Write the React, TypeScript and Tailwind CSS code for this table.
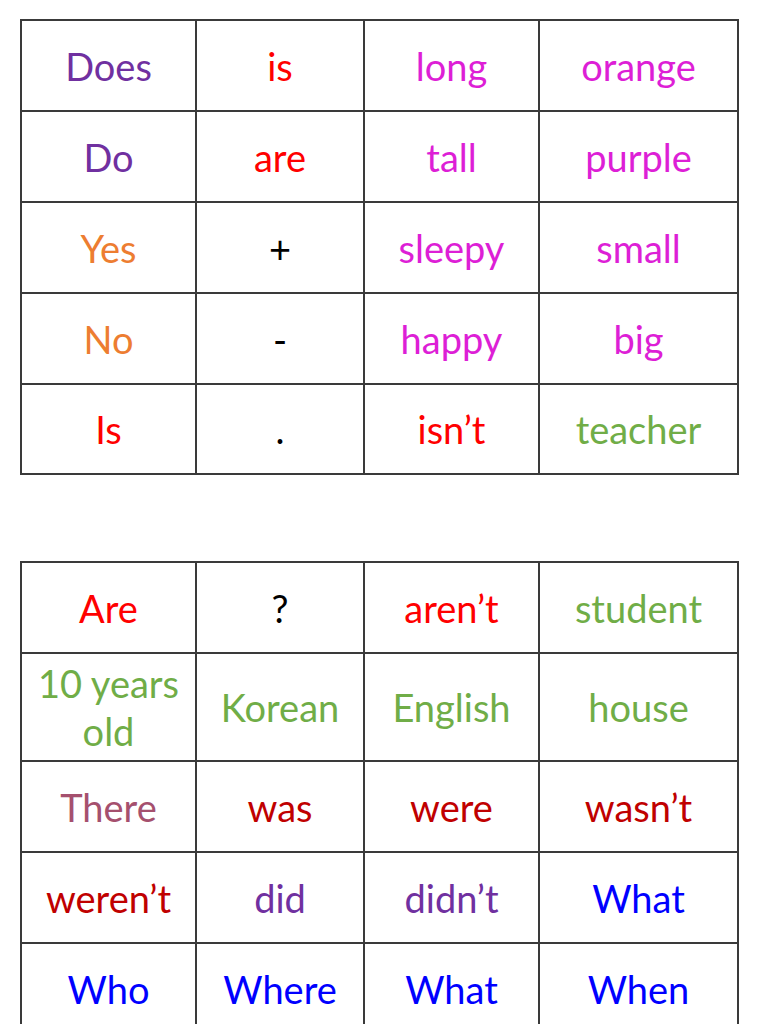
import React from "react";

type Cell = { t: string; c: string };

const P = "text-[#7030A0]";
const R = "text-[#FF0000]";
const M = "text-[#DD1FD6]";
const O = "text-[#ED7D31]";
const G = "text-[#70AD47]";
const K = "text-black";
const DR = "text-[#C00000]";
const B = "text-[#0000FF]";
const RO = "text-[#A5506E]";

const table1: Cell[][] = [
  [{ t: "Does", c: P }, { t: "is", c: R }, { t: "long", c: M }, { t: "orange", c: M }],
  [{ t: "Do", c: P }, { t: "are", c: R }, { t: "tall", c: M }, { t: "purple", c: M }],
  [{ t: "Yes", c: O }, { t: "+", c: K }, { t: "sleepy", c: M }, { t: "small", c: M }],
  [{ t: "No", c: O }, { t: "-", c: K }, { t: "happy", c: M }, { t: "big", c: M }],
  [{ t: "Is", c: R }, { t: ".", c: K }, { t: "isn\u2019t", c: R }, { t: "teacher", c: G }],
];

const table2: Cell[][] = [
  [{ t: "Are", c: R }, { t: "?", c: K }, { t: "aren\u2019t", c: R }, { t: "student", c: G }],
  [{ t: "10 years old", c: G }, { t: "Korean", c: G }, { t: "English", c: G }, { t: "house", c: G }],
  [{ t: "There", c: RO }, { t: "was", c: DR }, { t: "were", c: DR }, { t: "wasn\u2019t", c: DR }],
  [{ t: "weren\u2019t", c: DR }, { t: "did", c: P }, { t: "didn\u2019t", c: P }, { t: "What", c: B }],
  [{ t: "Who", c: B }, { t: "Where", c: B }, { t: "What", c: B }, { t: "When", c: B }],
];

function Grid({ rows, heights }: { rows: Cell[][]; heights: string[] }) {
  return (
    <table className="table-fixed border-collapse w-[717px]">
      <colgroup>
        <col className="w-[175px]" />
        <col className="w-[168px]" />
        <col className="w-[175px]" />
        <col className="w-[199px]" />
      </colgroup>
      <tbody>
        {rows.map((row, i) => (
          <tr key={i} className={heights[i]}>
            {row.map((cell, j) => (
              <td
                key={j}
                className={`border-2 border-[#3a3a3a] text-center align-middle p-0 leading-[48px] ${cell.c}`}
              >
                {cell.t}
              </td>
            ))}
          </tr>
        ))}
      </tbody>
    </table>
  );
}

export default function App() {
  return (
    <div
      className="w-[768px] h-[1024px] overflow-hidden bg-white pt-[19px] pl-[20px] text-[38px]"
      style={{ fontFamily: "Lato, 'Open Sans', sans-serif" }}
    >
      <Grid rows={table1} heights={["h-[91px]", "h-[91px]", "h-[91px]", "h-[91px]", "h-[90px]"]} />
      <div className="h-[86px]" />
      <Grid rows={table2} heights={["h-[91px]", "h-[108px]", "h-[91px]", "h-[91px]", "h-[91px]"]} />
    </div>
  );
}
